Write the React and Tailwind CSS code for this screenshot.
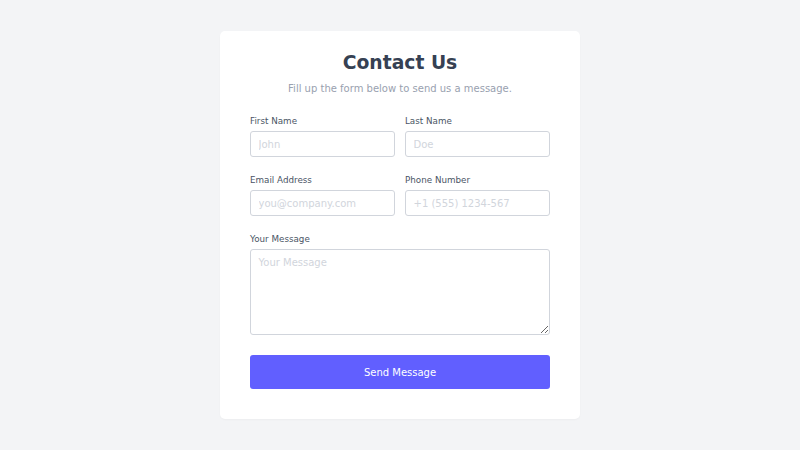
import React, { useState } from "react";

function Field({ label, placeholder, type = "text", value, onChange }) {
  return (
    <label className="flex flex-col">
      <span className="mb-[4px] text-[8.75px] leading-[12.5px] text-gray-600">{label}</span>
      <input
        type={type}
        placeholder={placeholder}
        value={value}
        onChange={onChange}
        className="w-full rounded-[3px] border border-gray-300 px-[7.5px] py-[4.5px] text-[10px] leading-[15px] text-gray-700 placeholder:text-gray-300 focus:outline-none focus:border-indigo-400"
      />
    </label>
  );
}

export default function App() {
  const [form, setForm] = useState({
    first: "",
    last: "",
    email: "",
    phone: "",
    message: "",
  });

  const set = (key) => (e) => setForm({ ...form, [key]: e.target.value });

  return (
    <div className="min-h-screen flex items-center justify-center bg-gray-100 font-['DejaVu_Sans',sans-serif]">
      <div className="w-[360px] rounded-[5px] bg-white px-[30px] pt-[21px] pb-[30px] shadow-[0_1px_2px_rgba(0,0,0,0.03)]">
        <h1 className="text-center text-[18.75px] leading-[22.5px] font-bold text-gray-700">Contact Us</h1>
        <p className="mt-[6px] text-center text-[10px] leading-[15px] text-gray-400">
          Fill up the form below to send us a message.
        </p>

        <form className="mt-[19px] flex flex-col gap-[16.5px]" onSubmit={(e) => e.preventDefault()}>
          <div className="grid grid-cols-2 gap-[10px]">
            <Field label="First Name" placeholder="John" value={form.first} onChange={set("first")} />
            <Field label="Last Name" placeholder="Doe" value={form.last} onChange={set("last")} />
          </div>
          <div className="grid grid-cols-2 gap-[10px]">
            <Field label="Email Address" type="email" placeholder="you@company.com" value={form.email} onChange={set("email")} />
            <Field label="Phone Number" type="tel" placeholder="+1 (555) 1234-567" value={form.phone} onChange={set("phone")} />
          </div>
          <label className="flex flex-col">
            <span className="mb-[4px] text-[8.75px] leading-[12.5px] text-gray-600">Your Message</span>
            <textarea
              placeholder="Your Message"
              value={form.message}
              onChange={set("message")}
              className="h-[86px] w-full rounded-[3px] border border-gray-300 px-[7.5px] py-[4.5px] text-[10px] leading-[15px] text-gray-700 placeholder:text-gray-300 focus:outline-none focus:border-indigo-400"
            />
          </label>
          <button
            type="submit"
            className="mt-[3.5px] h-[34px] w-full rounded-[3px] bg-indigo-500 text-[10px] text-white hover:bg-indigo-600"
          >
            Send Message
          </button>
        </form>
      </div>
    </div>
  );
}
